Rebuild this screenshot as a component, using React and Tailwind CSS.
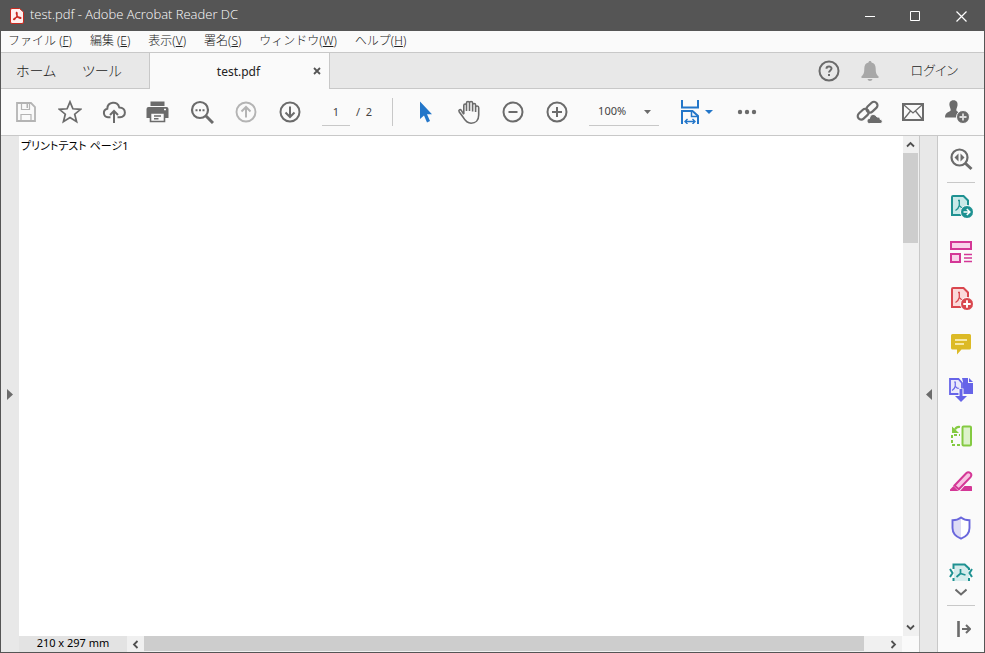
import React from 'react'

const Icon = ({ children, className = 'size-6', box = '0 0 24 24' }) => (
    <svg viewBox={box} className={className} fill="none" aria-hidden="true">
        {children}
    </svg>
)

const ToolButton = ({ label, children }) => (
    <button aria-label={label} className="w-11 h-full shrink-0 flex items-center justify-center">
        {children}
    </button>
)

const menus = [
    { name: 'ファイル ', key: 'F' },
    { name: '編集 ', key: 'E' },
    { name: '表示', key: 'V' },
    { name: '署名', key: 'S' },
    { name: 'ウィンドウ', key: 'W' },
    { name: 'ヘルプ', key: 'H' },
]

/* Acrobat mark used inside the document icons */
const mark = 'M9 6.500h1.300V11.500c-.6 2.300-2 4-3.800 5M10.300 11.500c1.200 1.800 2.700 2.700 4.700 2.700'

const TitleBar = () => (
    <header className="h-[30px] shrink-0 flex items-center bg-[#555555] text-white">
        <Icon className="ml-[9px] w-[14px] h-4" box="0 0 14 16">
            <path d="M2 .5h7.500L13.500 4v10a1.500 1.500 0 0 1-1.500 1.500H2A1.500 1.500 0 0 1 .5 14V2A1.500 1.500 0 0 1 2 .5z" fill="#fff0ee" stroke="#c9291f" />
            <path d="M6.700 4.200c-1 .4-.2 2.600.8 4 1 1.500 2.600 2.500 3.400 2 .4-.9-1.400-1.200-3.100-1s-4.400 1.300-4.300 2.300c.8 1 2.500-1.600 3.100-3 .6-1.500.9-4 .1-4.300z" stroke="#c9291f" strokeWidth="1.200" />
        </Icon>
        <h1 className="ml-[6px] grow pb-[2px] text-[13px] font-light font-['Open_Sans','Noto_Sans',sans-serif]">test.pdf - Adobe Acrobat Reader DC</h1>
        <button aria-label="最小化" className="w-[45px] h-full flex items-center justify-center">
            <Icon className="size-[11px]" box="0 0 11 11"><path d="M0 5.500h10" stroke="#fff" /></Icon>
        </button>
        <button aria-label="最大化" className="w-[45px] h-full flex items-center justify-center">
            <Icon className="size-[11px]" box="0 0 11 11"><path d="M.5.5h9v9h-9z" stroke="#fff" /></Icon>
        </button>
        <button aria-label="閉じる" className="w-[46px] h-full flex items-center justify-center">
            <Icon className="size-[11px]" box="0 0 11 11"><path d="m.5.5 10 10m0-10-10 10" stroke="#fff" strokeWidth="1.200" /></Icon>
        </button>
    </header>
)

const MenuBar = () => (
    <nav className="h-[21px] shrink-0 flex items-center gap-[18px] pl-[7px] bg-[#fafafa] text-[12px] font-light text-[#222]">
        {menus.map((m) => (
            <button key={m.key} className="pb-px whitespace-pre leading-5">
                {m.name}(<span className="underline">{m.key}</span>)
            </button>
        ))}
    </nav>
)

const TabBar = () => (
    <div className="h-[37px] shrink-0 flex border-t border-[#c8c8c8] bg-[#e8e8e8]">
        <div className="w-[148px] flex items-center gap-[26px] pl-[15px] border-b border-[#c8c8c8] text-[14px] font-light text-[#222] [font-feature-settings:'palt']">
            <button>ホーム</button>
            <button>ツール</button>
        </div>
        <div className="w-[181px] flex items-center justify-end pr-2 border-x border-[#c8c8c8] bg-[#fafafa]">
            <button className="grow pl-[14px] pt-[2px] text-[12px] text-[#222]">test.pdf</button>
            <button aria-label="タブを閉じる">
                <Icon className="size-2" box="0 0 8 8"><path d="m1 1 6 6m0-6-6 6" stroke="#555" strokeWidth="1.800" /></Icon>
            </button>
        </div>
        <div className="grow flex items-center justify-end border-b border-[#c8c8c8]">
            <button aria-label="ヘルプ" className="mr-5">
                <Icon>
                    <circle cx="12" cy="12" r="9.500" stroke="#6b6b6b" strokeWidth="2" />
                    <path d="M9.500 9.800c0-3 5-3 5-.2 0 1.900-2.500 1.800-2.500 4" stroke="#6b6b6b" strokeWidth="2" />
                    <path d="M11 15h2v2h-2z" fill="#6b6b6b" />
                </Icon>
            </button>
            <button aria-label="通知" className="mr-8">
                <Icon className="w-[18px] h-5" box="0 0 18 20">
                    <path d="M9 0c1 0 1.500.6 1.500 1.500 3 .6 4.200 3 4.200 6 0 4.500.8 6.300 2.800 7.800V17H.5v-1.700c2-1.500 2.800-3.300 2.800-7.800 0-3 1.200-5.400 4.200-6C7.500.6 8 0 9 0zM6.500 18h5c-.3 1.300-1.200 2-2.500 2s-2.200-.7-2.500-2z" fill="#a8a8a8" />
                </Icon>
            </button>
            <button className="mr-[26px] text-[13px] font-light text-[#222] [font-feature-settings:'palt']">ログイン</button>
        </div>
    </div>
)

const ToolBar = () => (
    <div className="h-[47px] shrink-0 flex items-center pl-[3px] pr-[5px] border-b border-[#c8c8c8] bg-[#fafafa] text-[11px]">
        <ToolButton label="保存">
            <Icon>
                <path d="M3 3h14l4 4v14H3z" stroke="#b4b4b4" strokeWidth="1.800" />
                <path d="M7.500 3v6.500h8V3M7 21v-6.500h10V21" stroke="#b4b4b4" strokeWidth="1.200" />
                <path d="M12.500 4h1.500v4h-1.500z" fill="#b4b4b4" />
            </Icon>
        </ToolButton>
        <ToolButton label="スター">
            <Icon><path d="m12 1.800 2.900 7 7.700.5-5.900 4.900 1.900 7.500-6.600-4.100-6.600 4.100 1.900-7.500-5.900-4.900 7.700-.5z" stroke="#6b6b6b" strokeWidth="1.700" /></Icon>
        </ToolButton>
        <ToolButton label="アップロード">
            <Icon>
                <path d="M8.500 17.200H6a4.300 4.300 0 0 1-.7-8.500C5.500 1.400 15.800.6 17.200 7.400c7.600.3 7.300 9.800.8 9.800h-2.500" stroke="#6b6b6b" strokeWidth="2" />
                <path d="M12 23V11.500M8 15l4-4 4 4" stroke="#6b6b6b" strokeWidth="2" />
            </Icon>
        </ToolButton>
        <ToolButton label="印刷">
            <Icon>
                <path d="M4.500 1.500h14V6h-14zM2.500 7h18a2 2 0 0 1 2 2v9h-4v-5h-14v5h-4V9a2 2 0 0 1 2-2z" fill="#6b6b6b" />
                <path d="M4.500 13h14v8.500h-14zM8 16h7M8 18.800h4.500" stroke="#6b6b6b" strokeWidth="1.600" />
                <path d="M18 9.500h2" stroke="#fafafa" strokeWidth="1.500" />
            </Icon>
        </ToolButton>
        <ToolButton label="検索">
            <Icon>
                <circle cx="10" cy="10" r="8" stroke="#6b6b6b" strokeWidth="2.200" />
                <path d="m16 16 7 7" stroke="#6b6b6b" strokeWidth="3" />
                <path d="M5.500 9.200h2v2h-2zM9 9.200h2v2H9zM12.500 9.200h2v2h-2z" fill="#6b6b6b" />
            </Icon>
        </ToolButton>
        <ToolButton label="前のページ">
            <Icon>
                <circle cx="12" cy="12" r="9.500" stroke="#b4b4b4" strokeWidth="1.900" />
                <path d="M12 17.500V7.500M7.500 11.500 12 7l4.500 4.500" stroke="#b4b4b4" strokeWidth="2" />
            </Icon>
        </ToolButton>
        <ToolButton label="次のページ">
            <Icon>
                <circle cx="12" cy="12" r="9.500" stroke="#6b6b6b" strokeWidth="2" />
                <path d="M12 6.500v10M7.500 12.500 12 17l4.500-4.500" stroke="#6b6b6b" strokeWidth="2" />
            </Icon>
        </ToolButton>
        <input aria-label="ページ番号" defaultValue="1" className="ml-[10px] w-7 h-7 border-b border-[#c8c8c8] bg-transparent text-center outline-none" />
        <span className="ml-[6px] whitespace-pre">/  2</span>
        <div className="ml-5 mr-[10px] w-px h-7 bg-[#c8c8c8]" />
        <ToolButton label="選択ツール">
            <Icon><path d="M7 1.500v17.600l4-3.700 3 7 3-1.300-3-6.900h5z" fill="#2376c9" /></Icon>
        </ToolButton>
        <ToolButton label="手のひらツール">
            <Icon>
                <path d="M6.800 14V5.500c0-2 2.700-2 2.700 0V11m0-5.500V3c0-2 3-2 3 0v8m0-8c0-2 3.100-2 3.100 0v8.500m0-6.500c0-2 3-2 3 0v7m0-4.500c0-2 3.100-2 3.100.2V15c0 5-3 8.200-7.600 8.200-4.800 0-6.600-3.600-8.100-6.200L2.300 12c-1.200-2 .8-3 2-1.700l2.500 4" stroke="#6b6b6b" strokeWidth="1.600" strokeLinejoin="round" />
            </Icon>
        </ToolButton>
        <ToolButton label="ズームアウト">
            <Icon>
                <circle cx="12" cy="12" r="9.500" stroke="#6b6b6b" strokeWidth="2" />
                <path d="M7.500 12h9" stroke="#6b6b6b" strokeWidth="2" />
            </Icon>
        </ToolButton>
        <ToolButton label="ズームイン">
            <Icon>
                <circle cx="12" cy="12" r="9.500" stroke="#6b6b6b" strokeWidth="2" />
                <path d="M7 12h10M12 7v10" stroke="#6b6b6b" strokeWidth="2" />
            </Icon>
        </ToolButton>
        <div className="ml-[10px] w-[70px] h-7 flex items-center border-b border-[#c8c8c8]">
            <select aria-label="倍率" defaultValue="100%" className="w-full pl-[9px] appearance-none bg-transparent outline-none">
                <option>100%</option>
                <option>150%</option>
                <option>200%</option>
            </select>
            <Icon className="shrink-0 mr-2 w-[7px] h-1" box="0 0 7 4"><path d="M0 0h7L3.500 4z" fill="#6b6b6b" /></Icon>
        </div>
        <button aria-label="幅に合わせる" className="ml-[22px] flex items-center gap-[6px]">
            <Icon className="w-[18px] h-6" box="0 0 18 24">
                <path d="M1 0v7.500h16V0M1 24V11h10.500L17 16v8" stroke="#2376c9" strokeWidth="2" />
                <path d="M10.500 11v5.500H17" stroke="#2376c9" strokeWidth="1.500" />
                <path d="M5 21.500h8M6.500 19l-2.500 2.500 2.500 2.500m5-5 2.500 2.500-2.500 2.500" stroke="#2376c9" strokeWidth="1.400" />
            </Icon>
            <Icon className="w-2 h-1" box="0 0 8 4"><path d="M0 0h8L4 4z" fill="#2376c9" /></Icon>
        </button>
        <button aria-label="その他" className="ml-[22px] h-full">
            <Icon>
                <circle cx="5" cy="12" r="2.200" fill="#6b6b6b" />
                <circle cx="12" cy="12" r="2.200" fill="#6b6b6b" />
                <circle cx="19" cy="12" r="2.200" fill="#6b6b6b" />
            </Icon>
        </button>
        <div className="grow" />
        <ToolButton label="リンクを共有">
            <Icon className="size-7" box="-2 -2 28 28">
                <g stroke="#6b6b6b" strokeWidth="2.200">
                    <rect x="8.700" y="3.700" width="12.500" height="7" rx="3.500" transform="rotate(-43 15 7.200)" />
                    <rect x="0" y="10.700" width="12.500" height="7" rx="3.500" transform="rotate(-43 6.200 14.200)" />
                </g>
                <path d="M12.500 23.500c-3.300 0-3.300-4.800 0-5 .3-4.500 5.500-5.500 7.500-1.500 2.300-.2 3.300 1 3 2.300 2.800 0 3.200 4.200 0 4.200z" fill="#6b6b6b" stroke="#fafafa" />
            </Icon>
        </ToolButton>
        <ToolButton label="メール">
            <Icon>
                <path d="m3 5 9 8 9-8M3 19l6.500-8m11.500 8-6.500-8" stroke="#6b6b6b" strokeWidth="1.300" />
                <path d="M2 4h20v16H2z" stroke="#6b6b6b" strokeWidth="2" />
            </Icon>
        </ToolButton>
        <ToolButton label="ユーザーを追加">
            <Icon className="size-7" box="-2 -2 28 28">
                <path d="M8.500.2c3.300 0 4.400 2.300 4 5.200-.3 2-1.200 3-1.200 4.600 0 2 4.700 2 4.700 7.500H0c0-6 5.700-5.400 5.700-7.500 0-1.600-.9-2.600-1.200-4.600-.4-2.900.7-5.200 4-5.200z" fill="#6b6b6b" />
                <circle cx="18" cy="17" r="6.500" fill="#6b6b6b" stroke="#fafafa" />
                <path d="M18 13.500v7M14.500 17h7" stroke="#ddd" strokeWidth="1.800" />
            </Icon>
        </ToolButton>
    </div>
)

const DocIcon = ({ color, fill, children }) => (
    <Icon>
        <path d="M4 2h10.500L19 6.500V21H3V3a1 1 0 0 1 1-1z" fill={fill} stroke={color} strokeWidth="2" />
        <path d={mark} stroke={color} strokeWidth="1.300" />
        <circle cx="18" cy="18" r="6.500" fill={color} stroke="#fafafa" />
        {children}
    </Icon>
)

const tools = [
    {
        name: 'PDF を書き出し',
        icon: <DocIcon color="#1e9191" fill="#c9e9e8"><path d="M14.500 18h6m-2.700-3 3 3-3 3" stroke="#fff" strokeWidth="1.600" /></DocIcon>,
    },
    {
        name: 'ページを整理',
        icon: (
            <Icon>
                <path d="M2 2h20v7H2zM2 14h9v8H2z" fill="#f9d3ea" stroke="#d43796" strokeWidth="2" />
                <path d="M15 14.500h8M15 18h8M15 21.500h8" stroke="#d43796" strokeWidth="1.400" />
            </Icon>
        ),
    },
    {
        name: 'PDF を作成',
        icon: <DocIcon color="#d9474e" fill="#fbd9da"><path d="M18 14.300v7.400M14.300 18h7.400" stroke="#fff" strokeWidth="1.900" /></DocIcon>,
    },
    {
        name: '注釈',
        icon: (
            <Icon>
                <path d="M3.500 2h17A1.500 1.500 0 0 1 22 3.500v12.500a1.500 1.500 0 0 1-1.500 1.500h-8L8 22.500v-5H3.500A1.500 1.500 0 0 1 2 16V3.500A1.500 1.500 0 0 1 3.500 2z" fill="#dcba26" />
                <path d="M6 8h12M6 12h9" stroke="#fff8ce" strokeWidth="1.700" />
            </Icon>
        ),
    },
    {
        name: 'ファイルを結合',
        icon: (
            <Icon className="w-6 h-7" box="0 -2 24 28">
                <path d="M13 14V5l-3.500-4H1v15h9" fill="#eae9fb" stroke="#6664e8" strokeWidth="1.800" />
                <path d={mark} transform="translate(-2.500 -1.500) scale(.85)" stroke="#6664e8" strokeWidth="1.400" />
                <path d="M13 0h6v5h5v11H14V4zM20 0l4 4h-4z" fill="#6664e8" />
                <path d="M12 10.500v9" stroke="#fafafa" strokeWidth="5" />
                <path d="M12 11v9" stroke="#6664e8" strokeWidth="3" />
                <path d="M6 18h12l-6 6z" fill="#6664e8" />
            </Icon>
        ),
    },
    {
        name: 'ページを回転',
        icon: (
            <Icon>
                <rect x="13.500" y="2.500" width="8.500" height="19" rx="1" fill="#ddf2cb" stroke="#84ca42" strokeWidth="2" />
                <path d="M11 21H3V11h8" stroke="#84ca42" strokeWidth="2" strokeDasharray="3 2" />
                <path d="M11 3C8.500 2.500 7 3.500 6 5.500" stroke="#84ca42" strokeWidth="2" />
                <path d="M3 2.500V9h7z" fill="#84ca42" />
            </Icon>
        ),
    },
    {
        name: '墨消し',
        icon: (
            <Icon>
                <path d="m5.500 15.500 11.700-12.300c2.800-2.500 6.700.8 4.300 3.900L9.800 19.300z" fill="#f9c3e2" stroke="#d43796" strokeWidth="2" />
                <path d="m4.500 16 5 5H1v-1.500zM15.500 16H22a1 1 0 0 1 1 1v4H11z" fill="#d43796" />
            </Icon>
        ),
    },
    {
        name: '保護',
        icon: (
            <Icon>
                <path d="M12 1.500c2.500 2 5.300 2.800 8.500 2.800V12c0 5.300-3 8.500-8.500 10.700C6.500 20.500 3.500 17.300 3.500 12V4.300c3.200 0 6-.8 8.500-2.800z" fill="#fff" />
                <path d="M12 1.500v21.200C6.500 20.500 3.500 17.300 3.500 12V4.300c3.200 0 6-.8 8.500-2.800z" fill="#dedcf5" />
                <path d="M12 1.500c2.500 2 5.300 2.800 8.500 2.800V12c0 5.300-3 8.500-8.500 10.700C6.500 20.500 3.500 17.300 3.500 12V4.300c3.200 0 6-.8 8.500-2.800z" stroke="#6966dc" strokeWidth="1.900" />
            </Icon>
        ),
    },
]

const ToolsPane = () => (
    <aside className="w-[47px] shrink-0 flex flex-col items-center border-l border-[#c8c8c8] bg-[#fafafa]">
        <button aria-label="ツールを検索" className="h-[46px] shrink-0">
            <Icon>
                <circle cx="10.500" cy="10.500" r="8" stroke="#6b6b6b" strokeWidth="2.200" />
                <path d="m16 16 6.500 6" stroke="#6b6b6b" strokeWidth="3" />
                <path d="M9.500 6.500v8L5.500 10.500zM11.500 6.500v8l4-4z" fill="#6b6b6b" />
            </Icon>
        </button>
        <div className="w-7 h-px shrink-0 bg-[#c8c8c8]" />
        <div className="grow min-h-0 overflow-hidden flex flex-col">
            {tools.map((t) => (
                <button key={t.name} aria-label={t.name} className="h-[46px] shrink-0 flex items-center justify-center">
                    {t.icon}
                </button>
            ))}
            <button aria-label="PDF を最適化" className="shrink-0 pt-3">
                <Icon className="w-6 h-[18px]" box="0 0 24 18">
                    <path d="M5 4v14h15V6l-4-4H6z" fill="#d6ecec" />
                    <path d="M4.500 6V1.500h11.200L20 5.500V7" stroke="#1e9191" strokeWidth="2" />
                    <path d="M11.500 6v4.500L7.500 14m4-3.500 5 1.500" stroke="#1e9191" strokeWidth="1.700" />
                    <path d="m1 6 2.500 4L1 14m22-8-2.500 4 2.500 4M4.500 18v-3M20 18v-3" stroke="#1e9191" strokeWidth="2" />
                </Icon>
            </button>
        </div>
        <button aria-label="さらに表示" className="h-[22px] shrink-0 pb-1">
            <Icon className="w-3 h-2" box="0 0 12 8"><path d="m.5 1.500 5.500 5 5.500-5" stroke="#6b6b6b" strokeWidth="2" /></Icon>
        </button>
        <div className="w-7 h-px shrink-0 bg-[#c8c8c8]" />
        <button aria-label="ツールパネルを閉じる" className="h-[46px] shrink-0 pl-[5px]">
            <Icon className="w-[14px] h-4" box="0 0 14 16">
                <path d="M1.500 0v16" stroke="#6b6b6b" strokeWidth="2.600" />
                <path d="M5 8h8M9 4l4 4-4 4" stroke="#6b6b6b" strokeWidth="2" />
            </Icon>
        </button>
    </aside>
)

const Chevron = ({ d }) => (
    <Icon className="size-[9px]" box="0 0 9 9"><path d={d} stroke="#505050" strokeWidth="1.800" /></Icon>
)

const DocumentView = () => (
    <main className="grow min-w-0 flex flex-col bg-[#fafafa]">
        <div className="grow min-h-0 flex">
            <article className="grow pl-[2px] pt-[2px] bg-white text-[11px] leading-4 text-black">
                <p className="[font-feature-settings:'palt']">プリントテスト ページ1</p>
            </article>
            <div className="w-4 shrink-0 flex flex-col pr-px bg-[#f0f0f0]">
                <button aria-label="上へ" className="h-[17px] flex items-center justify-center"><Chevron d="M1 6.500 4.500 3 8 6.500" /></button>
                <div className="h-[90px] bg-[#cdcdcd]" />
                <div className="grow" />
                <button aria-label="下へ" className="h-[18px] flex items-center justify-center"><Chevron d="M1 2.500 4.500 6 8 2.500" /></button>
            </div>
        </div>
        <div className="h-4 shrink-0 flex pr-[17px] text-[11px] leading-[14px]">
            <div className="w-[108px] shrink-0 bg-[#e3e3e3] text-center text-black">210 x 297 mm</div>
            <div className="grow flex bg-[#f0f0f0]">
                <button aria-label="左へ" className="w-[17px] flex items-center justify-center"><Chevron d="M6.500 1 3 4.500 6.500 8" /></button>
                <div className="grow mr-[21px] h-[15px] bg-[#cdcdcd]" />
                <button aria-label="右へ" className="w-[17px] flex items-center justify-center"><Chevron d="M2.500 1 6 4.500 2.500 8" /></button>
            </div>
        </div>
    </main>
)

const App = () => {
    return (
        <div className="h-screen flex flex-col border border-[#555555] bg-[#fafafa] text-[#444] overflow-hidden font-['Noto_Sans','Noto_Sans_CJK_JP',sans-serif]">
            <TitleBar />
            <MenuBar />
            <TabBar />
            <ToolBar />
            <div className="grow min-h-0 flex">
                <button aria-label="ナビゲーションパネルを開く" className="w-[18px] shrink-0 flex items-center justify-center bg-[#e8e8e8]">
                    <Icon className="w-[6px] h-[11px]" box="0 0 6 11"><path d="M0 0v11l6-5.500z" fill="#6b6b6b" /></Icon>
                </button>
                <DocumentView />
                <button aria-label="ツールパネルの切り替え" className="w-[18px] shrink-0 flex items-center justify-center border-l border-[#c8c8c8] bg-[#e8e8e8]">
                    <Icon className="w-[6px] h-[11px]" box="0 0 6 11"><path d="M6 0v11L0 5.500z" fill="#6b6b6b" /></Icon>
                </button>
                <ToolsPane />
            </div>
        </div>
    )
}

export default App
